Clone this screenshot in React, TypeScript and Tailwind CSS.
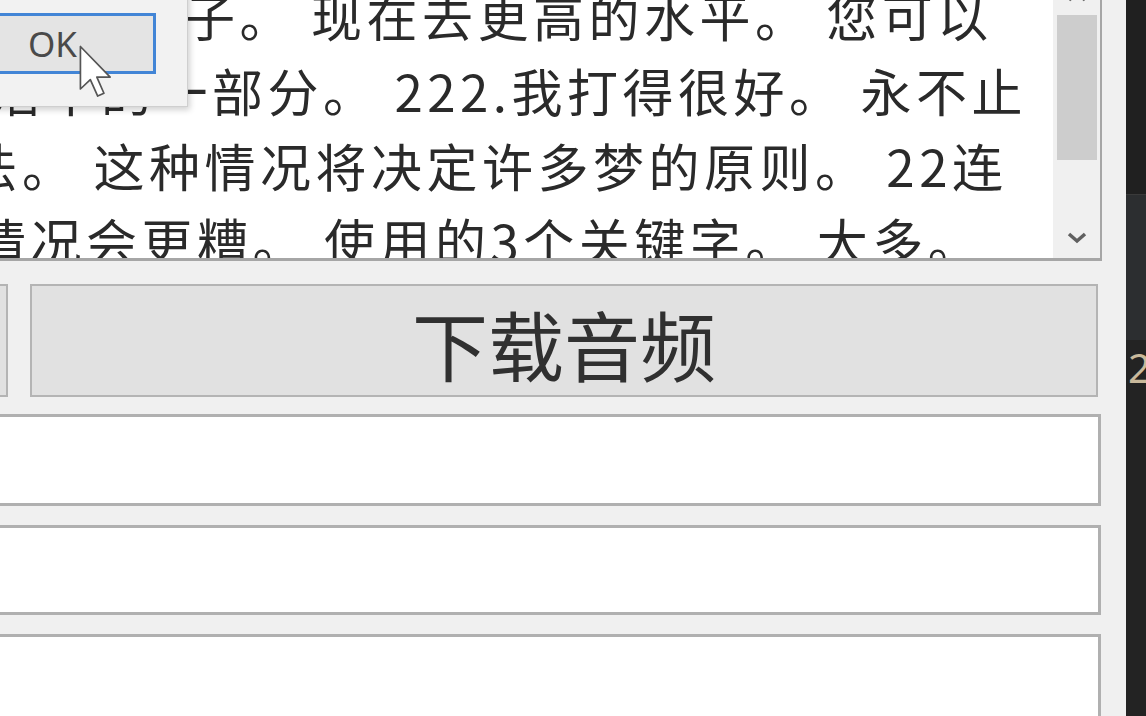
import React from "react";

const lines = [
  { cls: "-ml-[38px]", text: "是你的样子。 现在去更高的水平。 您可以" },
  { cls: "-ml-[10px]", text: "活中的一部分。 222.我打得很好。 永不止" },
  { cls: "-ml-[89px]", text: "方法。 这种情况将决定许多梦的原则。 22连" },
  { cls: "-ml-[25px]", text: "情况会更糟。 使用的3个关键字。 大多。" },
];

export default function App() {
  return (
    <div
      className="relative w-[1146px] h-[716px] overflow-hidden flex bg-[#232323]"
      style={{ fontFamily: '"Noto Sans", "Noto Sans CJK SC", sans-serif' }}
    >
      {/* main window */}
      <div className="w-[1126px] h-full bg-[#f0f0f0] flex flex-col shrink-0">
        {/* text box */}
        <div className="w-[1102px] h-[261px] bg-white border-r-2 border-b-[3px] border-[#a6a6a6] flex shrink-0">
          <div className="flex-1 overflow-hidden">
            <div
              className="-mt-[22px] text-[51px] leading-[75px] tracking-[4.5px] text-[#2a2a2a] whitespace-nowrap"
              style={{ fontFamily: '"Noto Sans CJK SC", sans-serif' }}
            >
              {lines.map((l, i) => (
                <div key={i} className={l.cls}>
                  {l.text}
                </div>
              ))}
            </div>
          </div>
          <div className="w-[47px] h-full bg-[#f0f0f0] flex flex-col items-center">
            <div className="h-[15px] w-full flex justify-center overflow-hidden">
              <svg width="22" height="14" viewBox="0 0 22 14" className="-mt-[11px]">
                <path d="M3 11 L11 4 L19 11" fill="none" stroke="#606060" strokeWidth="3.5" />
              </svg>
            </div>
            <div className="w-[40px] h-[145px] bg-[#cdcdcd]" />
            <div className="flex-1" />
            <svg width="22" height="14" viewBox="0 0 22 14" className="mb-[13px]">
              <path d="M3 3 L11 10 L19 3" fill="none" stroke="#606060" strokeWidth="3.5" />
            </svg>
          </div>
        </div>

        {/* buttons row */}
        <div className="mt-[23px] h-[113px] flex gap-[22px] shrink-0">
          <div className="w-[8px] h-full bg-[#e1e1e1] border-y-2 border-r-2 border-[#b4b4b4]" />
          <div className="w-[1068px] h-full bg-[#e1e1e1] border-2 border-[#b4b4b4] flex items-center justify-center">
            <span
              className="text-[76px] leading-none text-[#303030] pt-[4px]"
              style={{ fontFamily: '"Noto Sans CJK SC", sans-serif' }}
            >
              下载音频
            </span>
          </div>
        </div>

        {/* inputs */}
        <div className="mt-[17px] flex flex-col gap-[19px]">
          <div className="w-[1101px] h-[92px] bg-white border-y-[3px] border-r-[3px] border-[#b0b0b0]" />
          <div className="w-[1101px] h-[90px] bg-white border-y-[3px] border-r-[3px] border-[#b0b0b0]" />
          <div className="w-[1101px] h-[90px] bg-white border-y-[3px] border-r-[3px] border-[#b0b0b0]" />
        </div>
      </div>

      {/* right dark strip */}
      <div className="flex-1 h-full flex flex-col">
        <div className="h-[195px] bg-[#202020] border-b border-[#3a3a3a]" />
        <div className="h-[145px] bg-[#2c2e30]" />
        <div className="flex-1 bg-[#232323] pt-[8px] pl-[2px] overflow-hidden">
          <span className="text-[40px] leading-none text-[#c9b99b] whitespace-nowrap">2</span>
        </div>
      </div>

      {/* message box overlay */}
      <div className="absolute left-[-70px] top-[-30px] w-[258px] h-[137px] bg-[#f2f2f2] border border-[#cfcfcf] shadow-[2px_3px_6px_rgba(0,0,0,0.18)] pt-[42px] pl-[18px]">
        <div className="w-[207px] h-[61px] bg-[#e4e4e4] border-[3px] border-[#4285d6] flex items-center justify-center">
          <span className="text-[35px] leading-none text-[#4a4a4a]">OK</span>
        </div>
      </div>

      {/* mouse cursor */}
      <svg className="absolute left-[79px] top-[45px]" width="34" height="54" viewBox="0 0 12 19">
        <path
          d="M0.5 0.5 L0.5 15.5 L4 12.2 L6.6 18 L8.8 17 L6.3 11.3 L11 11.3 Z"
          fill="#ffffff"
          stroke="#555"
          strokeWidth="0.6"
          strokeLinejoin="round"
        />
      </svg>
    </div>
  );
}
